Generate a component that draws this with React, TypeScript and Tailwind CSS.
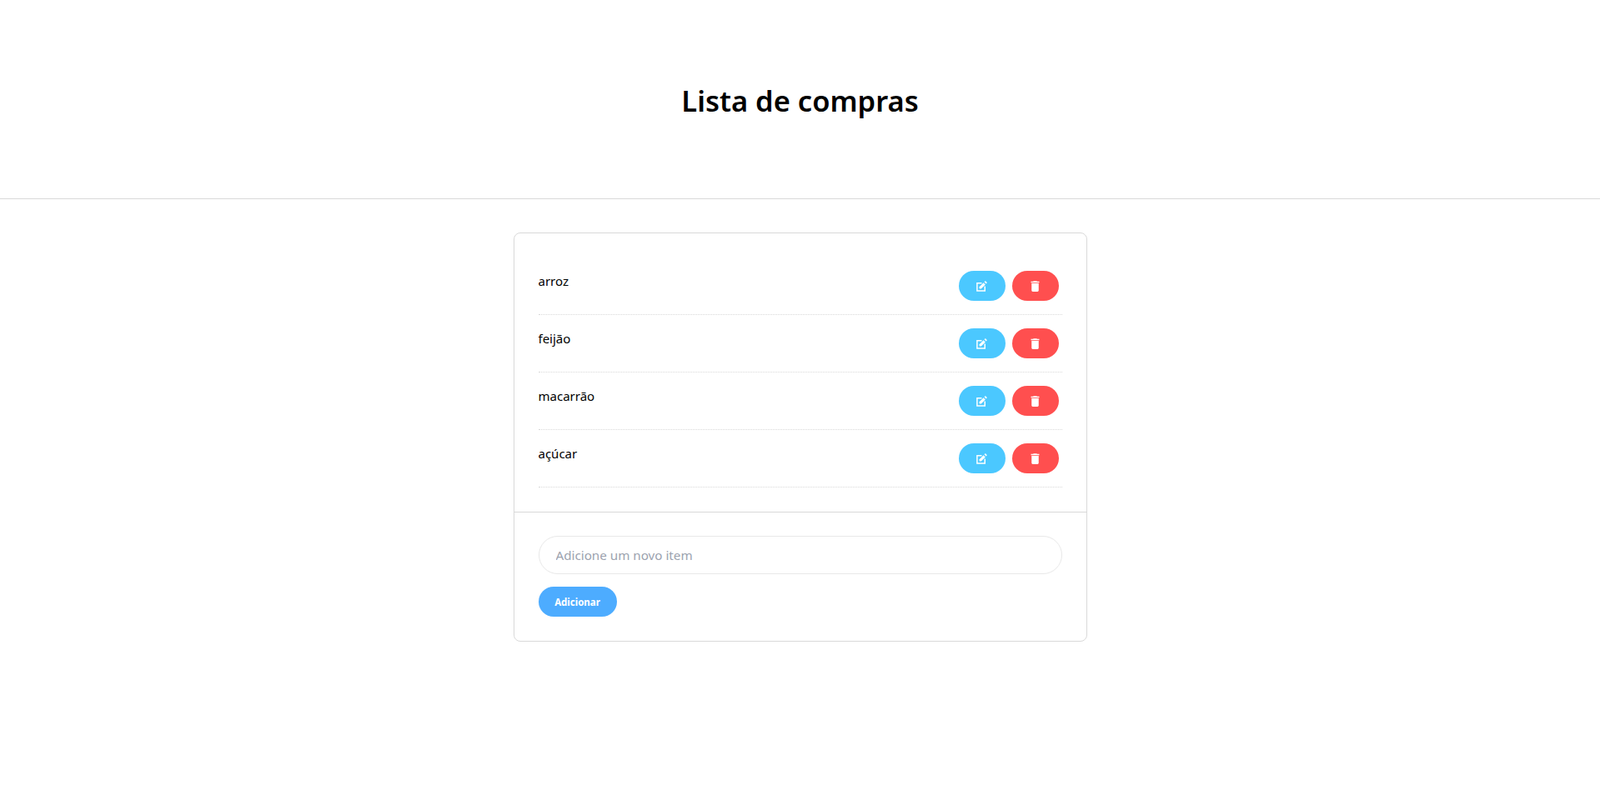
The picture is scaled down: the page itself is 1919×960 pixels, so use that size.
import React from 'react';
import { MdDelete } from 'react-icons/md';

const items = ['arroz', 'feijão', 'macarrão', 'açúcar'];

const EditIcon = () => (
  <svg width="13" height="13" viewBox="0 0 13 13" fill="none">
    <path d="M6.5 2.75H0.9V12.1H10.25V6.5" stroke="currentColor" strokeWidth="1.5" />
    <path d="M3.6 9.4V7.2L8.6 2.2L10.8 4.4L5.8 9.4Z" fill="currentColor" />
    <path d="M9.5 1.3L10.3 0.5C10.6 0.2 11 0.2 11.3 0.5L12.5 1.7C12.8 2 12.8 2.4 12.5 2.7L11.7 3.5Z" fill="currentColor" />
  </svg>
);

const ItemRow = ({ name }: { name: string }) => {
  return (
    <li className="flex justify-between items-start h-[69px] pt-4 pr-1 border-b border-dotted border-[#d9d9d9]">
      <span className="text-[15px] leading-6 text-black">{name}</span>
      <div className="flex gap-2">
        <button className="flex items-center justify-center w-14 h-9 rounded-full bg-[#4bc8ff] text-white">
          <EditIcon />
        </button>
        <button className="flex items-center justify-center w-14 h-9 rounded-full bg-[#ff4f4f] text-white text-[17px]">
          <MdDelete />
        </button>
      </div>
    </li>
  );
};

const App = () => {
  return (
    <div className="min-h-[960px] bg-white font-['Noto_Sans',sans-serif]">
      <header className="h-[239px] pt-1 flex items-center justify-center border-b border-[#d9d9d9]">
        <h1 className="text-[34.5px] leading-none font-semibold text-black">Lista de compras</h1>
      </header>
      <main className="flex justify-center pt-10">
        <div className="w-[688px] rounded-lg border border-[#d9d9d9]">
          <ul className="px-[29px] pt-[29px] pb-[29px] border-b border-[#d9d9d9]">
            {items.map((item) => (
              <ItemRow key={item} name={item} />
            ))}
          </ul>
          <form className="px-[29px] pt-7 pb-[29px]">
            <input
              className="block w-full h-[46px] px-5 rounded-[23px] border border-[#e8e8e8] text-[15.2px] outline-none placeholder:text-[#9ca3af]"
              placeholder="Adicione um novo item"
            />
            <button
              type="button"
              className="mt-[15px] block w-[94px] h-9 pt-px rounded-full bg-[#4dacff] text-white text-[11.5px] font-bold"
            >
              Adicionar
            </button>
          </form>
        </div>
      </main>
    </div>
  );
};

export default App;
